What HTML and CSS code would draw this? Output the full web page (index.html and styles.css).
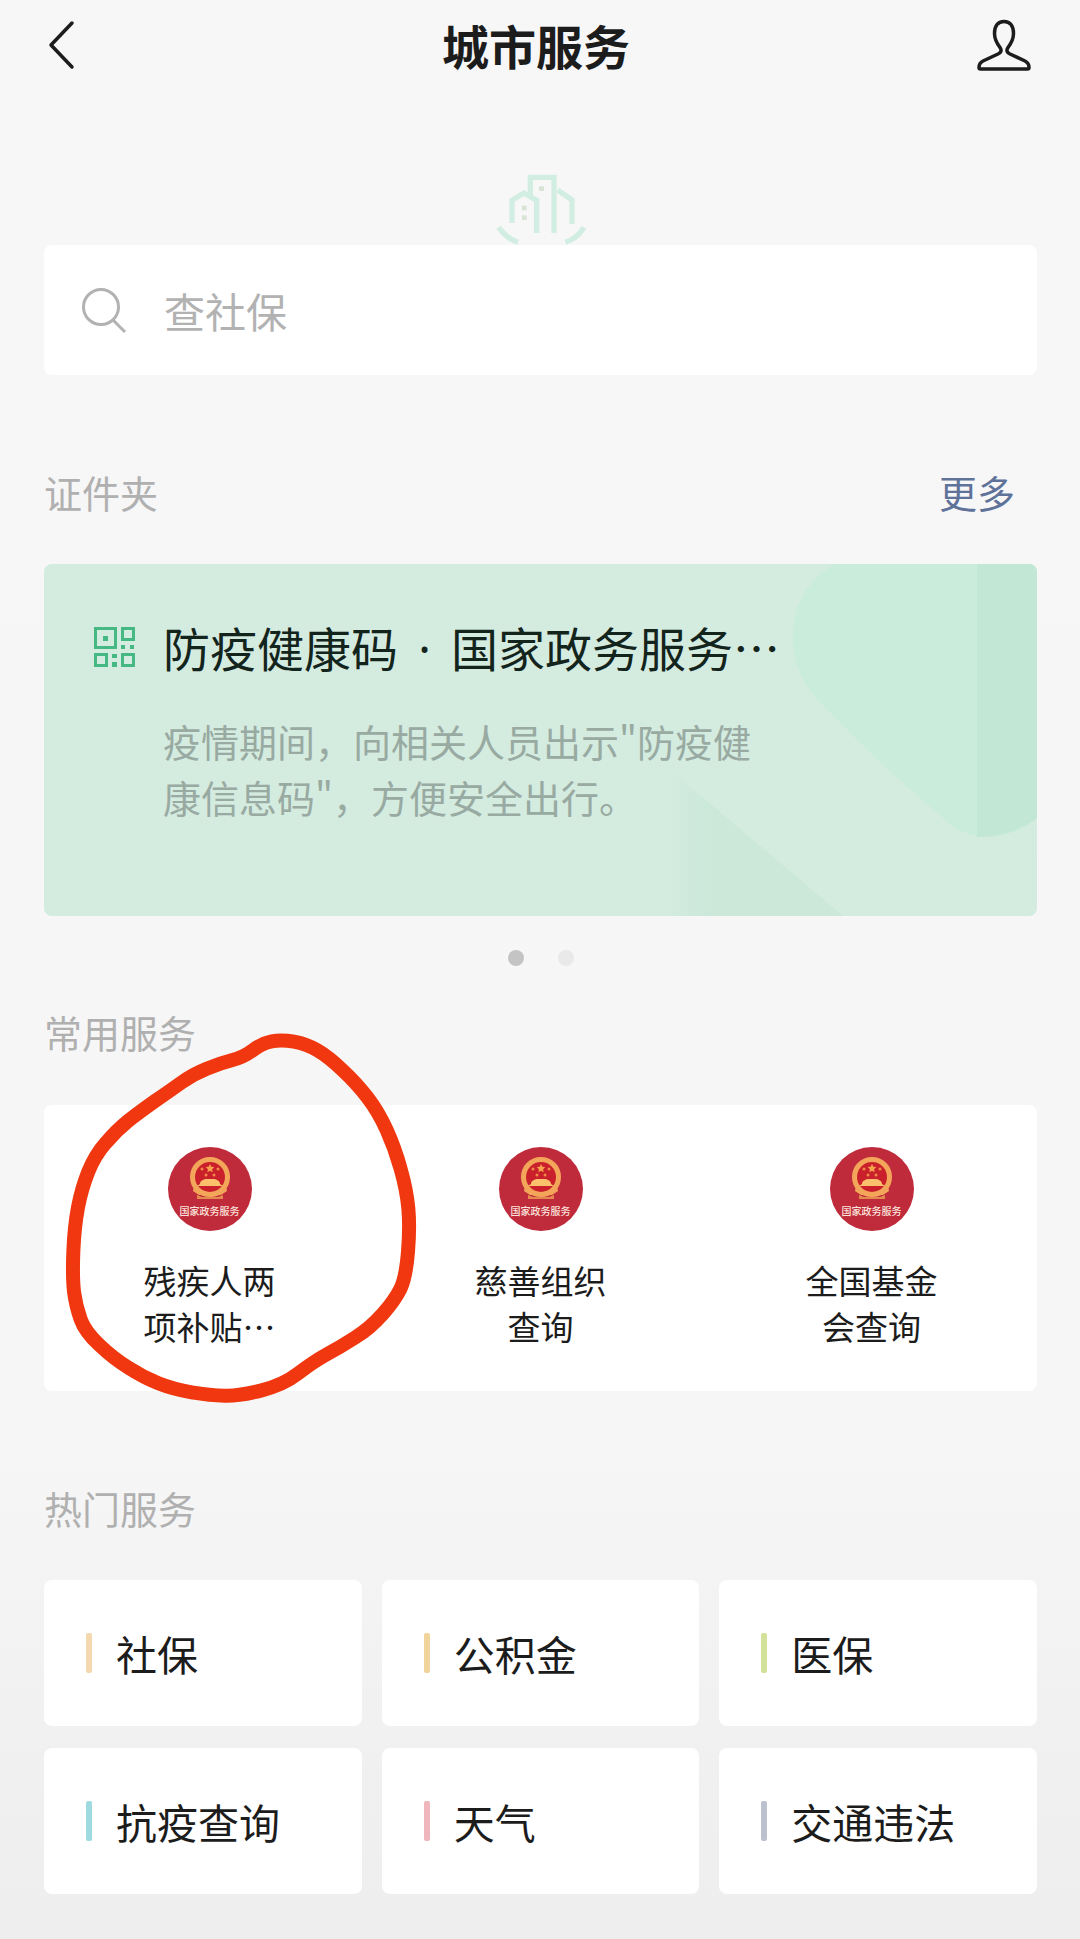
FILE: index.html
```html
<!DOCTYPE html>
<html lang="zh-CN">
<head>
<meta charset="utf-8">
<meta name="viewport" content="width=device-width, initial-scale=1">
<title>城市服务</title>
<link rel="stylesheet" href="styles.css">
</head>
<body>
<svg class="defs" aria-hidden="true">
  <symbol id="emblem" viewBox="0 0 84 84">
    <circle cx="42" cy="30" r="17.500" fill="#c9202c" stroke="#f3a65a" stroke-width="5"/>
    <path d="M26 39c2 5 5 7 9 8h14c4-1 7-3 9-8l1 5-6 4H31l-6-4z" fill="#f3a65a"/>
    <path d="M32 37c0-3 3-4 5-5h10c2 1 5 2 5 5l3 2H29z" fill="#fbc06c"/>
    <path d="M34 50h16l5-2v4H29v-4z" fill="#e58a4e"/>
    <path d="M42 17l1.300 2.700 3 .4-2.200 2.100.5 3-2.600-1.400-2.600 1.400.5-3-2.200-2.100 3-.4z" fill="#f8a44e"/>
    <g fill="#f08a45"><circle cx="34" cy="22" r="1.500"/><circle cx="50" cy="22" r="1.500"/><circle cx="38" cy="28" r="1.500"/><circle cx="46" cy="28" r="1.500"/></g>
  </symbol>
</svg>

<header class="topbar">
  <button class="icon-button" type="button" aria-label="返回">
    <svg width="36" height="50" viewBox="-7 0 36 50"><path d="M25 3L4 25l21 22" fill="none" stroke="#1c1c1c" stroke-width="3.500" stroke-linejoin="round" stroke-linecap="round"/></svg>
  </button>
  <h1 class="title">城市服务</h1>
  <button class="icon-button" type="button" aria-label="我的">
    <svg width="56" height="54" viewBox="0 0 56 54"><path d="M28 3.500c-6.500 0-9.500 5-9.500 12 0 6 2.500 10 5.500 14 2 3 1 5-2 6.500L7 43c-3 1.500-4 3-4 6.500q0 1.500 1.500 1.500h47q1.500 0 1.500-1.500c0-3.500-1-5-4-6.500l-15-7c-3-1.500-4-3.500-2-6.500 3-4 5.500-8 5.500-14 0-7-3-12-9.500-12z" fill="none" stroke="#1c1c1c" stroke-width="3.500" stroke-linejoin="round"/></svg>
  </button>
</header>

<main class="page">
  <svg class="city" width="90" height="72" viewBox="105 72 270 216" aria-hidden="true">
    <g fill="none" stroke="#d2eee2" stroke-width="16">
      <path d="M153 222V154l36-22 38 22v98"/><path d="M208 140V85h71v167"/><path d="M290 123l43 30v72"/>
      <path d="M113 235q22 33 58 45"/><path d="M369 235q-20 33-56 45"/>
    </g>
    <g fill="#d9e3d5"><rect x="234" y="112" width="15" height="14"/><rect x="183" y="170" width="14" height="14"/><rect x="183" y="199" width="14" height="14"/></g>
  </svg>

  <form class="search" role="search">
    <svg width="48" height="48" viewBox="0 0 48 48" aria-hidden="true"><g fill="none" stroke="#b2b2b2" stroke-width="3"><circle cx="21" cy="21" r="17.500"/><path d="M33 34l12 12"/></g></svg>
    <input class="search-input" type="search" placeholder="查社保" aria-label="搜索服务">
  </form>

  <section class="wallet">
    <div class="heading"><h2 class="label">证件夹</h2><a class="more" href="#more">更多</a></div>
    <a class="pass" href="#health-code">
      <svg class="pass-art" viewBox="0 0 400 352" aria-hidden="true">
        <defs>
          <linearGradient id="fade"><stop offset="0" stop-color="#cbe9da" stop-opacity="0"/><stop offset="1" stop-color="#cbe9da"/></linearGradient>
        </defs>
        <path d="M198 0C153 25 145 80 169 121C184 144 275 229 318 264C345 280 380 272 400 254V0z" fill="#c9ecdb"/>
        <path d="M340 0v273q34 0 60-19V0z" fill="#c3e7d5"/>
        <path d="M71 238L206 352H71z" fill="#cbe8d9"/>
        <path d="M30 203L71 238V352H30z" fill="url(#fade)"/>
      </svg>
      <svg class="qr" width="44" height="44" viewBox="0 0 44 44" aria-hidden="true">
        <g fill="none" stroke="#45b883" stroke-width="3"><rect x="2.500" y="3.500" width="20" height="19"/><rect x="29.500" y="3.500" width="11" height="11"/><rect x="2.500" y="29.500" width="11" height="11"/><rect x="29.500" y="29.500" width="11" height="11"/></g>
        <g fill="#45b883"><rect x="10" y="11" width="5" height="5"/><rect x="28" y="20" width="4" height="4"/><rect x="37" y="20" width="4" height="4"/><rect x="19" y="29" width="5" height="4"/><rect x="19" y="37" width="5" height="5"/></g>
      </svg>
      <div class="pass-body">
        <h3 class="pass-title">防疫健康码<span class="sep"> · </span>国家政务服务⋯</h3>
        <p class="pass-text">疫情期间，向相关人员出示"防疫健<br>康信息码"，方便安全出行。</p>
      </div>
    </a>
    <div class="dots"><span class="dot dot-on"></span><span class="dot"></span></div>
  </section>

  <section class="common">
    <h2 class="label">常用服务</h2>
    <div class="common-card">
      <a class="service" href="#s1"><span class="emblem"><svg class="emblem-art"><use href="#emblem"/></svg><span class="emblem-text">国家政务服务</span></span><span>残疾人两<br>项补贴⋯</span></a>
      <a class="service" href="#s2"><span class="emblem"><svg class="emblem-art"><use href="#emblem"/></svg><span class="emblem-text">国家政务服务</span></span><span>慈善组织<br>查询</span></a>
      <a class="service" href="#s3"><span class="emblem"><svg class="emblem-art"><use href="#emblem"/></svg><span class="emblem-text">国家政务服务</span></span><span>全国基金<br>会查询</span></a>
      <svg class="mark" width="400" height="420" viewBox="0 0 1200 1260" aria-hidden="true">
        <path d="M695 124Q725 118 762 125Q800 132 832 151Q865 170 907 210Q950 250 982 292Q1015 335 1040 390Q1065 445 1082 507Q1100 570 1105 625Q1110 680 1104 755Q1098 830 1082 865Q1065 900 1028 942Q990 985 945 1013Q900 1042 860 1063Q820 1085 775 1120Q730 1155 665 1171Q600 1188 555 1187Q510 1186 455 1177Q400 1168 355 1150Q310 1132 265 1103Q220 1075 178 1035Q135 995 122 958Q108 920 102 875Q97 830 100 755Q103 680 114 622Q125 565 145 515Q165 465 198 428Q230 390 265 362Q300 335 345 303Q390 272 425 247Q460 222 500 206Q540 190 575 181Q610 172 638 151Q665 130 695 124z" fill="none" stroke="#f0370f" stroke-width="42" stroke-linejoin="round"/>
      </svg>
    </div>
  </section>

  <section class="hot">
    <h2 class="label">热门服务</h2>
    <div class="grid">
      <a class="tile tile-orange" href="#h1">社保</a>
      <a class="tile tile-gold" href="#h2">公积金</a>
      <a class="tile tile-green" href="#h3">医保</a>
      <a class="tile tile-cyan" href="#h4">抗疫查询</a>
      <a class="tile tile-pink" href="#h5">天气</a>
      <a class="tile tile-slate" href="#h6">交通违法</a>
    </div>
  </section>
</main>
</body>
</html>
```
FILE: styles.css
```css
* { box-sizing: border-box; }

body {
  margin: 0;
  min-height: 100vh;
  font-family: "Noto Sans CJK SC", "Noto Sans", sans-serif;
  color: #1c1c1c;
  background: linear-gradient(#f7f7f7 0, #f6f6f6 75%, #f1f1f1 88%, #eeeeee 100%);
}

h1, h2, h3, p { margin: 0; font-weight: 400; }
a { color: inherit; text-decoration: none; }
svg { display: block; flex: none; }

.defs { position: absolute; width: 0; height: 0; }

.topbar {
  display: grid;
  grid-template-columns: 1fr auto 1fr;
  align-items: center;
  height: 90px;
  padding: 0 48px 0 40px;
}
.icon-button { padding: 0; border: 0; background: none; justify-self: start; }
.icon-button:last-child { justify-self: end; }
.title { font-size: 47px; line-height: 60px; font-weight: 700; }

.page { padding: 83px 43px 46px 44px; }

.city { margin: 0 auto; }

.search {
  display: flex;
  align-items: center;
  gap: 36px;
  height: 130px;
  padding: 0 36px;
  background: #fff;
  border-radius: 8px;
}
.search-input {
  flex: 1;
  min-width: 0;
  padding: 0;
  border: 0;
  outline: 0;
  background: none;
  font: inherit;
  font-size: 41px;
  line-height: 60px;
  height: 60px;
}
.search-input::placeholder { color: #b2b2b2; opacity: 1; }

.label { font-size: 38px; line-height: 56px; color: #b0b0b0; }

.heading {
  display: flex;
  justify-content: space-between;
  padding: 89px 22px 44px 0;
}
.more { font-size: 38px; line-height: 56px; color: #5f7299; }

.pass {
  position: relative;
  display: flex;
  gap: 26px;
  min-height: 352px;
  padding: 53px 49px;
  background: #d4ebe0;
  border-radius: 8px;
  overflow: hidden;
}
.pass-art { position: absolute; top: 0; right: 0; height: 100%; }
.qr { position: relative; margin-top: 8px; }
.pass-body { position: relative; }
.pass-title { font-size: 47px; line-height: 60px; color: #13241c; }
.sep { margin: 0 8px; font-family: "Noto Sans", sans-serif; line-height: 1; }
.pass-text { margin-top: 36px; font-size: 38px; line-height: 56px; color: #98aaa1; }

.dots { display: flex; justify-content: center; gap: 34px; padding: 34px 0 38px; }
.dot { width: 16px; height: 16px; border-radius: 50%; background: #e9e9e9; }
.dot-on { background: #c4c4c4; }

.common-card {
  position: relative;
  display: grid;
  grid-template-columns: repeat(3, 1fr);
  margin-top: 45px;
  padding: 42px 0;
  background: #fff;
  border-radius: 8px;
}
.service {
  display: flex;
  flex-direction: column;
  align-items: center;
  gap: 26px;
  font-size: 33px;
  line-height: 46px;
  text-align: center;
}
.emblem {
  display: grid;
  width: 84px;
  height: 84px;
  background: #bf2b3b;
  border-radius: 50%;
}
.emblem-art { grid-area: 1 / 1; width: 84px; height: 84px; }
.emblem-text {
  grid-area: 1 / 1;
  align-self: end;
  padding-bottom: 12px;
  font-size: 10px;
  line-height: 16px;
  font-weight: 500;
  color: #fbe3dc;
  white-space: nowrap;
}
.mark { position: absolute; top: -105px; left: -4px; pointer-events: none; }

.hot { padding-top: 89px; }
.grid {
  display: grid;
  grid-template-columns: repeat(3, 1fr);
  gap: 22px 20px;
  margin-top: 44px;
}
.tile {
  display: flex;
  align-items: center;
  gap: 24px;
  height: 146px;
  padding-left: 42px;
  font-size: 41px;
  line-height: 60px;
  background: #fff;
  border-radius: 8px;
}
.tile::before { content: ""; width: 6px; height: 40px; border-radius: 2px; background: var(--bar); }
.tile-orange { --bar: #f3d8b0; }
.tile-gold { --bar: #f1d49c; }
.tile-green { --bar: #d2e29b; }
.tile-cyan { --bar: #a0dae1; }
.tile-pink { --bar: #efb6bc; }
.tile-slate { --bar: #bcc1d0; }
```
